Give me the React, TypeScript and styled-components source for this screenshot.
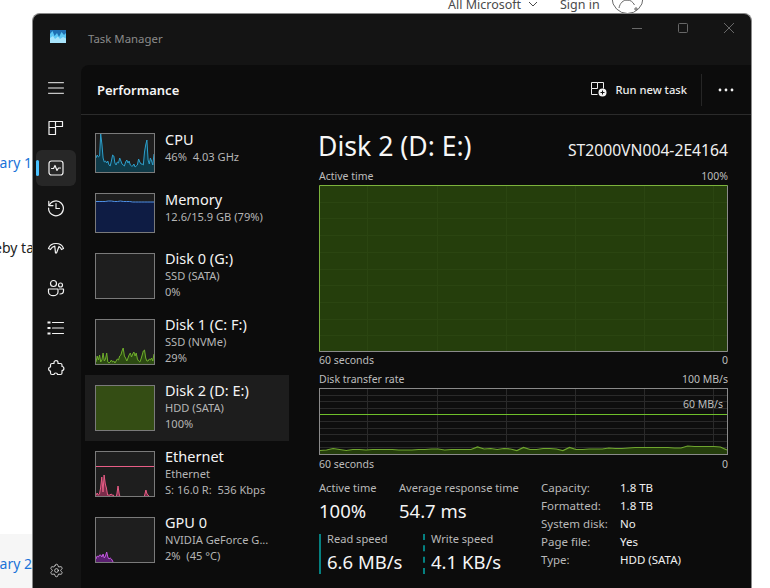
import styled, { createGlobalStyle } from "styled-components";
import { Settings } from "lucide-react";

const GlobalStyle = createGlobalStyle`
    html, body {
        margin: 0;
        padding: 0;
        height: 100%;
        background: #fff;
        overflow: hidden;
        font-family: "Noto Sans", "Open Sans", sans-serif;
    }
`;

const Page = styled.div`
    position: relative;
    width: 770px;
    height: 588px;
    overflow: hidden;
    background: #fff;
`;

const TopNav = styled.div`
    display: flex;
    align-items: center;
    height: 8px;
    padding-left: 448px;
    font-size: 12.5px;
    color: #4a4a4a;
`;

const NavLink = styled.span<{ $width: number }>`
    display: flex;
    align-items: center;
    gap: 7px;
    width: ${(p) => p.$width}px;
    white-space: nowrap;
`;

const Avatar = styled.svg`
    flex: none;
    display: block;
    margin-top: -12px;
    fill: none;
    stroke: #6a6a6a;
`;

const Scrap = styled.div<{ $top: number; $blue?: boolean }>`
    display: flex;
    justify-content: flex-end;
    width: 32px;
    height: 20px;
    margin-top: ${(p) => p.$top}px;
    font-size: 14px;
    line-height: 20px;
    white-space: nowrap;
    color: ${(p) => (p.$blue ? "#1a73d8" : "#222")};
`;

const ClippedText = styled.span`
    margin-right: -2px;
`;

const ScrapStrip = styled.div`
    width: 32px;
    height: 54px;
    margin-top: 276px;
    padding-top: 20px;
    box-sizing: border-box;
    background: #f6f6f6;
`;

const TaskWindow = styled.div`
    position: absolute;
    left: 32px;
    top: 13px;
    box-sizing: border-box;
    width: 720px;
    height: 575px;
    display: flex;
    flex-direction: column;
    background: #141414;
    border: 1px solid #8a8a8a;
    border-bottom: none;
    border-radius: 8px 8px 0 0;
    overflow: hidden;
`;

const TitleBar = styled.div`
    flex: 0 0 51px;
    display: flex;
    align-items: flex-start;
    position: relative;
`;

const AppLogo = styled.svg`
    margin: 16px 0 0 17px;
`;

const AppTitle = styled.span`
    margin: 17px 0 0 22px;
    font-size: 11.4px;
    line-height: 16px;
    color: #8a8a8a;
`;

const WindowControls = styled.div`
    margin-left: auto;
    margin-right: -1px;
    display: flex;
`;

const ControlButton = styled.svg`
    display: block;
    width: 46px;
    height: 28px;
    stroke: #686868;
    fill: none;
`;

const Body = styled.div`
    flex: 1;
    display: flex;
    min-height: 0;
`;

const Sidebar = styled.nav`
    flex: 0 0 48px;
    box-sizing: border-box;
    position: relative;
    display: flex;
    flex-direction: column;
    align-items: center;
    padding: 5px 2px 0 0;
`;

const NavButton = styled.div<{ $active?: boolean }>`
    position: relative;
    flex: 0 0 36px;
    width: 40px;
    margin-bottom: 4px;
    display: flex;
    align-items: center;
    justify-content: center;
    border-radius: 6px;
    background: ${(p) => (p.$active ? "#272727" : "transparent")};
    color: #f2f2f2;

    ${(p) =>
        p.$active &&
        `&::before {
            content: "";
            position: absolute;
            left: 0;
            top: 10px;
            width: 3px;
            height: 16px;
            border-radius: 2px;
            background: #4cc2ff;
        }`}
`;

const NavSpacer = styled.div`
    flex: 1;
`;

const SettingsButton = styled(NavButton)`
    margin-bottom: 0;
`;

const Main = styled.main`
    flex: 1;
    display: flex;
    flex-direction: column;
    min-width: 0;
    background: #0c0c0c;
    border-top-left-radius: 8px;
`;

const Header = styled.header`
    flex: 0 0 50px;
    display: flex;
    align-items: center;
    box-sizing: border-box;
    border-bottom: 1px solid #2b2b2b;
    padding: 0 17px 0 16px;
`;

const PageTitle = styled.h1`
    margin: 0;
    font-size: 13px;
    font-weight: 600;
    color: #f5f5f5;
`;

const RunTask = styled.div`
    margin-left: auto;
    display: flex;
    align-items: center;
    gap: 8px;
    font-size: 11.2px;
    font-weight: 500;
    color: #ededed;
`;

const HeaderDivider = styled.span`
    width: 1px;
    height: 32px;
    margin: 0 16px 0 14px;
    background: #262626;
`;

const MoreDots = styled.svg`
    display: block;
`;

const Content = styled.div`
    flex: 1;
    display: flex;
    min-height: 0;
`;

const DeviceList = styled.div`
    flex: 0 0 238px;
    box-sizing: border-box;
    padding: 8px 0 0 4px;
`;

const DeviceRow = styled.div<{ $active?: boolean; $tall?: boolean }>`
    width: 204px;
    height: ${(p) => (p.$tall ? 66 : 60)}px;
    box-sizing: border-box;
    display: flex;
    gap: 10px;
    padding: 10px;
    background: ${(p) => (p.$active ? "#1d1d1d" : "transparent")};
`;

const Thumb = styled.svg`
    flex: none;
    display: block;
    background: #1e1e1e;
    border: 1px solid #7a7a7a;
    box-sizing: border-box;
`;

const DeviceInfo = styled.div<{ $tall?: boolean }>`
    min-width: 0;
    display: flex;
    flex-direction: column;
    margin-top: ${(p) => (p.$tall ? -5 : -4)}px;
`;

const DeviceName = styled.div`
    font-size: 14.5px;
    line-height: 20px;
    color: #f4f4f4;
    white-space: nowrap;
`;

const DeviceSub = styled.div`
    font-size: 11.1px;
    line-height: 16px;
    color: #b5b5b5;
    white-space: nowrap;
`;

const Detail = styled.section`
    flex: 0 0 409px;
    padding-top: 15px;
`;

const DetailHead = styled.div`
    display: flex;
    align-items: center;
    justify-content: space-between;
    height: 32px;
    margin-bottom: 6px;
`;

const DetailTitle = styled.h2`
    margin: 0 0 0 -1px;
    font-size: 26.6px;
    font-weight: 400;
    color: #f7f7f7;
    white-space: nowrap;
`;

const ModelName = styled.div`
    font-size: 15.7px;
    margin-top: 7px;
    color: #f0f0f0;
`;

const Caption = styled.div<{ $gapTop?: number }>`
    display: flex;
    justify-content: space-between;
    height: 16px;
    margin-top: ${(p) => p.$gapTop ?? 0}px;
    font-size: 10.5px;
    line-height: 16px;
    color: #bdbdbd;
`;

const GraphBox = styled.div<{ $height: number }>`
    position: relative;
    height: ${(p) => p.$height}px;
    margin-top: 1px;
`;

const GraphSvg = styled.svg`
    display: block;
    width: 409px;
    height: 100%;
`;

const GraphTag = styled.span`
    position: absolute;
    right: 5px;
    top: 8px;
    font-size: 10.5px;
    line-height: 16px;
    color: #bdbdbd;
`;

const Stats = styled.div`
    display: flex;
    margin-top: 8px;
`;

const StatsLeft = styled.div`
    flex: 0 0 222px;
`;

const StatRow = styled.div`
    display: flex;
`;

const Stat = styled.div<{ $width: number }>`
    flex: 0 0 ${(p) => p.$width}px;
    white-space: nowrap;
`;

const SpeedStat = styled(Stat)<{ $dashed?: boolean }>`
    box-sizing: border-box;
    height: 40px;
    margin-top: 10px;
    padding-left: 6px;
    border-left: 2px ${(p) => (p.$dashed ? "dashed" : "solid")} #058080;
`;

const StatLabel = styled.div`
    font-size: 11.1px;
    line-height: 16px;
    color: #b9b9b9;
`;

const SpeedLabel = styled(StatLabel)`
    margin-top: -3px;
`;

const StatValue = styled.div`
    margin-top: 2px;
    font-size: 18.5px;
    line-height: 26px;
    color: #f5f5f5;
`;

const InfoTable = styled.div`
    display: grid;
    grid-template-columns: 79px 1fr;
    grid-auto-rows: 18px;
    margin-top: -1px;
    font-size: 11.5px;
    line-height: 18px;
`;

const InfoKey = styled.span`
    color: #b9b9b9;
`;

const InfoValue = styled.span`
    color: #f0f0f0;
`;

const Icon = ({ children }: { children: React.ReactNode }) => (
    <svg width="20" height="20" viewBox="0 0 20 20" fill="none" stroke="currentColor" strokeWidth="1.2" strokeLinecap="round" strokeLinejoin="round">
        {children}
    </svg>
);

function areaPath(values: number[], w: number, h: number) {
    const step = w / (values.length - 1);
    const pts = values.map((v, i) => `${(i * step).toFixed(1)},${(h - v).toFixed(1)}`);
    return { line: `M${pts.join(" L")}`, area: `M0,${h} L${pts.join(" L")} L${w},${h} Z` };
}

const off = (n: number) => new Array<number>(n).fill(-2);

const cpu = [14, 17, 15, 16, 38, 28, 14, 10, 11, 9, 11, 7, 6, 11, 17, 16, 9, 7, 10, 9, 14, 11, 8, 7, 6, 10, 12, 9, 11, 7, 6, 6, 8, 5, 6, 7, 13, 10, 8, 8, 7, 20, 27, 32, 12, 8, 14, 11, 7, 18];
const mem = [30.5, 30.5, 30.5, 30.5, 31, 31, 30.5, 30.5, 31, 30.5, 30.5, 30.5, 30, 30, 30, 30, 30, 30, 30, 30];
const disk1 = [2, 8, 4, 9, 2, 4, 11, 3, 5, 11, 2, 1, 2, 4, 2, 3, 1, 3, 5, 4, 8, 9, 13, 16, 8, 6, 3, 6, 9, 11, 7, 10, 12, 8, 11, 5, 3, 2, 5, 9, 13, 14, 6, 3, 3, 5, 4, 6, 3, 10];
const ethernet = [1, 3, 1, 2, 8, 19, 4, 21, 12, 8, 1, 1, 1, 2, 1, 1, ...off(2), 2, 10, 2, ...off(21), 1, 6, 2, 1, ...off(5)];
const gpu = [3, 6, 5, 7, 7, 5, 8, 4, 6, 10, 5, 3, 4, 3, 1, ...off(35)];
const transfer = [3.5, 4, 5.5, 4.5, 3.5, 4.5, 4.5, 4, 4.5, 4.5, 4.5, 4.5, 4, 4, 4, 4.5, 4.5, 5, 5, 4, 4.5, 4.5, 4.5, 4.5, 7, 5, 5.5, 4.5, 5.5, 5, 3.5, 6.5, 4.5, 4.5, 5.5, 5.5, 5, 3.5, 6.5, 4.5, 4.5, 5, 5, 5, 6, 5.5, 5.5, 6, 6.5, 6.5, 6.5, 6.5, 6.5, 6.5, 6, 6, 8, 7.5, 7.5, 7.5, 7.5, 7, 4];

function Spark({ values, h, stroke, fill, extra, full }: { values?: number[]; h: number; stroke?: string; fill?: string; extra?: React.ReactNode; full?: boolean }) {
    const shape = values ? areaPath(values, 58, h - 2) : null;
    return (
        <Thumb width="60" height={h} viewBox={`0 0 58 ${h - 2}`} preserveAspectRatio="none">
            {full && <rect x="0" y="0" width="58" height={h - 2} fill={fill} />}
            {shape && <path d={shape.area} fill={fill} />}
            {shape && <path d={shape.line} fill="none" stroke={stroke} strokeWidth="1" />}
            {extra}
        </Thumb>
    );
}

function GridLines({ w, h, colour, rows }: { w: number; h: number; colour: string; rows: number }) {
    const xs = [48, 118, 187, 256, 325, 394];
    const ys = Array.from({ length: rows - 1 }, (_, i) => ((i + 1) * h) / rows);
    return (
        <g stroke={colour} strokeWidth="1" shapeRendering="crispEdges">
            {xs.map((x) => (
                <line key={x} x1={x + 0.5} x2={x + 0.5} y1="0" y2={h} />
            ))}
            {ys.map((y) => (
                <line key={y} x1="0" x2={w} y1={Math.round(y) + 0.5} y2={Math.round(y) + 0.5} />
            ))}
        </g>
    );
}

function ActiveGraph() {
    return (
        <GraphSvg viewBox="0 0 409 167" preserveAspectRatio="none">
            <rect width="409" height="167" fill="#253e0c" />
            <GridLines w={409} h={167} colour="#2b4511" rows={10} />
            <path d="M408.5,0.5 V166.5 H0.5" stroke="#8a8a8a" fill="none" />
            <path d="M0.5,166.5 V0.5 H408.5" stroke="#7cb33c" fill="none" />
        </GraphSvg>
    );
}

function TransferGraph() {
    const { line, area } = areaPath(transfer, 407, 65);
    return (
        <GraphSvg viewBox="0 0 409 67" preserveAspectRatio="none">
            <rect width="409" height="67" fill="#0e0e0e" />
            <GridLines w={409} h={66} colour="#2a2a2a" rows={10} />
            <g transform="translate(1,1)">
                <path d={area} fill="#253e0c" />
                <path d={line} fill="none" stroke="#6fa52f" strokeWidth="1.2" />
            </g>
            <line x1="1" x2="408" y1="26.5" y2="26.5" stroke="#6fbf2a" />
            <rect x="0.5" y="0.5" width="408" height="66" fill="none" stroke="#8a8a8a" />
        </GraphSvg>
    );
}

function App() {
    return (
        <Page>
            <GlobalStyle />
            <TopNav>
                <NavLink $width={112}>
                    All Microsoft
                    <svg width="10" height="6" viewBox="0 0 10 6" fill="none" stroke="#4a4a4a" strokeWidth="1">
                        <path d="M1 1l4 4 4-4" />
                    </svg>
                </NavLink>
                <NavLink $width={51}>Sign in</NavLink>
                <Avatar width="33" height="32" viewBox="0 0 33 32">
                    <circle cx="16.5" cy="16" r="15.5" />
                    <circle cx="16.5" cy="13" r="5" />
                    <path d="M8 26C9 21 12 18 16.5 18C19.5 18 22 20 23.5 23" />
                    <path d="M23 27H27M25 25V29" />
                </Avatar>
            </TopNav>
            <Scrap $top={145} $blue>ary 1</Scrap>
            <Scrap $top={65}>
                <ClippedText>eby ta</ClippedText>
            </Scrap>
            <ScrapStrip>
                <Scrap $top={0} $blue>ary 2</Scrap>
            </ScrapStrip>

            <TaskWindow>
                <TitleBar>
                    <AppLogo width="16" height="13" viewBox="0 0 16 13">
                        <rect width="16" height="13" fill="#5cc6f4" />
                        <path d="M0 4 L2.5 1 L4.5 6 L7 3 L9 7 L11.5 2 L14 5 L16 3 V0 H0 Z" fill="#1f6fb2" />
                        <path d="M0 8 L3 6 L5 9 L8 6.5 L10 9 L13 7 L16 8.5 V13 H0 Z" fill="#a8e4fb" />
                    </AppLogo>
                    <AppTitle>Task Manager</AppTitle>
                    <WindowControls>
                        <ControlButton viewBox="0 0 46 28">
                            <path d="M18 14.5 H28" />
                        </ControlButton>
                        <ControlButton viewBox="0 0 46 28">
                            <rect x="18.5" y="9.5" width="9" height="9" rx="1" />
                        </ControlButton>
                        <ControlButton viewBox="0 0 46 28">
                            <path d="M18 9 L28 19 M28 9 L18 19" />
                        </ControlButton>
                    </WindowControls>
                </TitleBar>
                <Body>
                    <Sidebar>
                        <NavButton>
                            <Icon>
                                <path d="M2.5 4.7H17.5M2.5 10H17.5M2.5 15.3H17.5" strokeWidth="1" />
                            </Icon>
                        </NavButton>
                        <NavButton>
                            <Icon>
                                <path d="M3 3.5H9.5V9.5H3ZM9.5 3.5H16.5V8.5H9.5M3 9.5V16.5H9.5V9.5" />
                            </Icon>
                        </NavButton>
                        <NavButton $active>
                            <Icon>
                                <rect x="3" y="3" width="14" height="14" rx="2.5" />
                                <path d="M5.5 10.5H7.5L9 7.5L11 12.5L12.5 10H14.5" />
                            </Icon>
                        </NavButton>
                        <NavButton>
                            <Icon>
                                <path d="M3.2 7.4A7.4 7.4 0 1 1 2.6 10" />
                                <path d="M2.8 3.4V7.6H7" />
                                <path d="M10 5.5V10.5H13.5" />
                            </Icon>
                        </NavButton>
                        <NavButton>
                            <Icon>
                                <path d="M2.5 10.5C3.5 7.5 6.5 5.5 10 5.5C13.5 5.5 16.5 7.5 17.5 10.5L15.5 11.5C15 10 14.2 9.2 13 8.5L10.5 15H9.5L8.8 8.2C7 8.5 5.5 9.5 4.5 11.5Z" />
                            </Icon>
                        </NavButton>
                        <NavButton>
                            <Icon>
                                <circle cx="7.5" cy="5.5" r="3" />
                                <circle cx="14.5" cy="7" r="2" />
                                <path d="M2.5 11H12V14A4.5 3.5 0 0 1 2.5 14Z" />
                                <path d="M13.5 11H17.5V13C17.5 15 16 16 14 16" />
                            </Icon>
                        </NavButton>
                        <NavButton>
                            <Icon>
                                <path d="M6.5 4.5H17.5M6.5 10H17.5M6.5 15.5H17.5" />
                                <path d="M2.5 4.5H3.5M2.5 10H3.5M2.5 15.5H3.5" strokeWidth="2" strokeLinecap="square" />
                            </Icon>
                        </NavButton>
                        <NavButton>
                            <Icon>
                                <path d="M8 4.5C8 2 12 2 12 4.5V5.5H14.5C15.5 5.5 16 6 16 7V8.5C18.5 8.5 18.5 12.5 16 12.5V15C16 16 15.5 16.5 14.5 16.5H11.5C11.5 14.5 8 14.5 8 16.5H6C5 16.5 4.5 16 4.5 15V13C2 13 2 9 4.5 9V7C4.5 6 5 5.5 6 5.5H8Z" />
                            </Icon>
                        </NavButton>
                        <NavSpacer />
                        <SettingsButton>
                            <Settings size={15} strokeWidth={1.2} />
                        </SettingsButton>
                    </Sidebar>
                    <Main>
                        <Header>
                            <PageTitle>Performance</PageTitle>
                            <RunTask>
                                <svg width="16" height="15" viewBox="0 0 16 15" fill="none" stroke="#eee" strokeWidth="1">
                                    <path d="M0.5 0.5H6.5V6.5H0.5ZM6.5 0.5H12.5V6.5M0.5 6.5V12.5H6.5" />
                                    <circle cx="11.5" cy="10.5" r="4" fill="#f2f2f2" stroke="none" />
                                    <path d="M11.5 8.5V12.5M9.5 10.5H13.5" stroke="#111" />
                                </svg>
                                Run new task
                            </RunTask>
                            <HeaderDivider />
                            <MoreDots width="16" height="4" viewBox="0 0 16 4" fill="#f2f2f2">
                                <circle cx="2" cy="2" r="1.4" />
                                <circle cx="8" cy="2" r="1.4" />
                                <circle cx="14" cy="2" r="1.4" />
                            </MoreDots>
                        </Header>
                        <Content>
                            <DeviceList>
                                <DeviceRow>
                                    <Spark values={cpu} h={40} stroke="#2e9fcb" fill="#0f3a48" />
                                    <DeviceInfo>
                                        <DeviceName>CPU</DeviceName>
                                        <DeviceSub>46%&nbsp; 4.03 GHz</DeviceSub>
                                    </DeviceInfo>
                                </DeviceRow>
                                <DeviceRow>
                                    <Spark values={mem} h={40} stroke="#4e8fe6" fill="#0e1c44" />
                                    <DeviceInfo>
                                        <DeviceName>Memory</DeviceName>
                                        <DeviceSub>12.6/15.9 GB (79%)</DeviceSub>
                                    </DeviceInfo>
                                </DeviceRow>
                                <DeviceRow $tall>
                                    <Spark h={46} />
                                    <DeviceInfo $tall>
                                        <DeviceName>Disk 0 (G:)</DeviceName>
                                        <DeviceSub>SSD (SATA)</DeviceSub>
                                        <DeviceSub>0%</DeviceSub>
                                    </DeviceInfo>
                                </DeviceRow>
                                <DeviceRow $tall>
                                    <Spark values={disk1} h={46} stroke="#6fae2c" fill="#2c4a12" />
                                    <DeviceInfo $tall>
                                        <DeviceName>Disk 1 (C: F:)</DeviceName>
                                        <DeviceSub>SSD (NVMe)</DeviceSub>
                                        <DeviceSub>29%</DeviceSub>
                                    </DeviceInfo>
                                </DeviceRow>
                                <DeviceRow $tall $active>
                                    <Spark h={46} full fill="#344d14" />
                                    <DeviceInfo $tall>
                                        <DeviceName>Disk 2 (D: E:)</DeviceName>
                                        <DeviceSub>HDD (SATA)</DeviceSub>
                                        <DeviceSub>100%</DeviceSub>
                                    </DeviceInfo>
                                </DeviceRow>
                                <DeviceRow $tall>
                                    <Spark
                                        values={ethernet}
                                        h={46}
                                        stroke="#e85d86"
                                        fill="#7a2c4a"
                                        extra={<line x1="0" x2="58" y1="14.5" y2="14.5" stroke="#e85d86" strokeWidth="1" />}
                                    />
                                    <DeviceInfo $tall>
                                        <DeviceName>Ethernet</DeviceName>
                                        <DeviceSub>Ethernet</DeviceSub>
                                        <DeviceSub>S: 16.0 R:&nbsp; 536 Kbps</DeviceSub>
                                    </DeviceInfo>
                                </DeviceRow>
                                <DeviceRow $tall>
                                    <Spark values={gpu} h={46} stroke="#c45ae0" fill="#5a1f70" />
                                    <DeviceInfo $tall>
                                        <DeviceName>GPU 0</DeviceName>
                                        <DeviceSub>NVIDIA GeForce G...</DeviceSub>
                                        <DeviceSub>2%&nbsp; (45 °C)</DeviceSub>
                                    </DeviceInfo>
                                </DeviceRow>
                            </DeviceList>
                            <Detail>
                                <DetailHead>
                                    <DetailTitle>Disk 2 (D: E:)</DetailTitle>
                                    <ModelName>ST2000VN004-2E4164</ModelName>
                                </DetailHead>
                                <Caption>
                                    <span>Active time</span>
                                    <span>100%</span>
                                </Caption>
                                <GraphBox $height={167}>
                                    <ActiveGraph />
                                </GraphBox>
                                <Caption>
                                    <span>60 seconds</span>
                                    <span>0</span>
                                </Caption>
                                <Caption $gapTop={3}>
                                    <span>Disk transfer rate</span>
                                    <span>100 MB/s</span>
                                </Caption>
                                <GraphBox $height={67}>
                                    <TransferGraph />
                                    <GraphTag>60 MB/s</GraphTag>
                                </GraphBox>
                                <Caption $gapTop={1}>
                                    <span>60 seconds</span>
                                    <span>0</span>
                                </Caption>
                                <Stats>
                                    <StatsLeft>
                                        <StatRow>
                                            <Stat $width={80}>
                                                <StatLabel>Active time</StatLabel>
                                                <StatValue>100%</StatValue>
                                            </Stat>
                                            <Stat $width={130}>
                                                <StatLabel>Average response time</StatLabel>
                                                <StatValue>54.7 ms</StatValue>
                                            </Stat>
                                        </StatRow>
                                        <StatRow>
                                            <SpeedStat $width={104}>
                                                <SpeedLabel>Read speed</SpeedLabel>
                                                <StatValue>6.6 MB/s</StatValue>
                                            </SpeedStat>
                                            <SpeedStat $width={100} $dashed>
                                                <SpeedLabel>Write speed</SpeedLabel>
                                                <StatValue>4.1 KB/s</StatValue>
                                            </SpeedStat>
                                        </StatRow>
                                    </StatsLeft>
                                    <InfoTable>
                                        <InfoKey>Capacity:</InfoKey>
                                        <InfoValue>1.8 TB</InfoValue>
                                        <InfoKey>Formatted:</InfoKey>
                                        <InfoValue>1.8 TB</InfoValue>
                                        <InfoKey>System disk:</InfoKey>
                                        <InfoValue>No</InfoValue>
                                        <InfoKey>Page file:</InfoKey>
                                        <InfoValue>Yes</InfoValue>
                                        <InfoKey>Type:</InfoKey>
                                        <InfoValue>HDD (SATA)</InfoValue>
                                    </InfoTable>
                                </Stats>
                            </Detail>
                        </Content>
                    </Main>
                </Body>
            </TaskWindow>
        </Page>
    );
}

export default App;
